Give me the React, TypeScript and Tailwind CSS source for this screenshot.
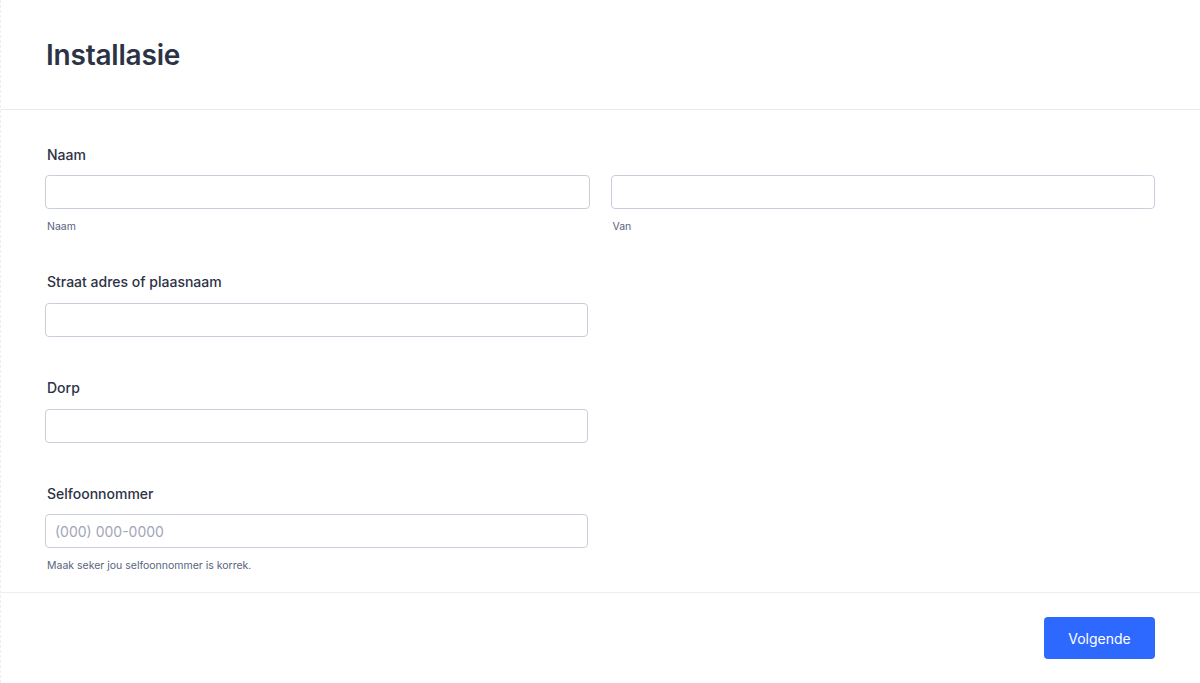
import React from "react";

const font = { fontFamily: "Inter, 'Noto Sans', sans-serif" };

function Label({ children }: { children: React.ReactNode }) {
  return (
    <div className="h-[20px] text-[14px] leading-[20px] font-medium text-[#2c3345] pl-[2px]">
      {children}
    </div>
  );
}

function Input({ placeholder }: { placeholder?: string }) {
  return (
    <input
      type="text"
      placeholder={placeholder}
      className="block w-full h-[34px] rounded-[4px] border border-[#c8ceda] bg-white px-[9px] text-[14px] text-[#2c3345] placeholder:text-[#a0a6b8] outline-none"
    />
  );
}

function Sub({ children }: { children: React.ReactNode }) {
  return (
    <div className="mt-[10px] h-[16px] text-[10.5px] leading-[16px] text-[#57647e] pl-[2px]">
      {children}
    </div>
  );
}

export default function App() {
  return (
    <div className="w-[1200px] h-[683px] bg-white flex flex-col border-l border-dashed border-[#eceef3]" style={font}>
      <div className="h-[110px] border-b border-[#e6e8ee] px-[45px] flex items-center">
        <h1 className="text-[28px] leading-[36px] font-semibold tracking-[-0.2px] text-[#2c3345]">Installasie</h1>
      </div>
      <div className="pl-[44px] pr-[45px] pt-[35px] pb-[18px] flex flex-col border-b border-[#eceef3]">
        <Label>Naam</Label>
        <div className="mt-[10px] grid grid-cols-2 gap-[21px]">
          <div>
            <Input />
            <Sub>Naam</Sub>
          </div>
          <div>
            <Input />
            <Sub>Van</Sub>
          </div>
        </div>
        <div className="mt-[37px] w-[543px]">
          <Label>Straat adres of plaasnaam</Label>
          <div className="mt-[11px]">
            <Input />
          </div>
        </div>
        <div className="mt-[41px] w-[543px]">
          <Label>Dorp</Label>
          <div className="mt-[11px]">
            <Input />
          </div>
        </div>
        <div className="mt-[41px] w-[543px]">
          <Label>Selfoonnommer</Label>
          <div className="mt-[10px]">
            <Input placeholder="(000) 000-0000" />
          </div>
          <Sub>Maak seker jou selfoonnommer is korrek.</Sub>
        </div>
      </div>
      <div className="flex justify-end px-[45px] pt-[24px]">
        <button className="w-[111px] h-[42px] rounded-[4px] bg-[#2e69ff] text-white text-[14px] font-normal">
          Volgende
        </button>
      </div>
    </div>
  );
}
